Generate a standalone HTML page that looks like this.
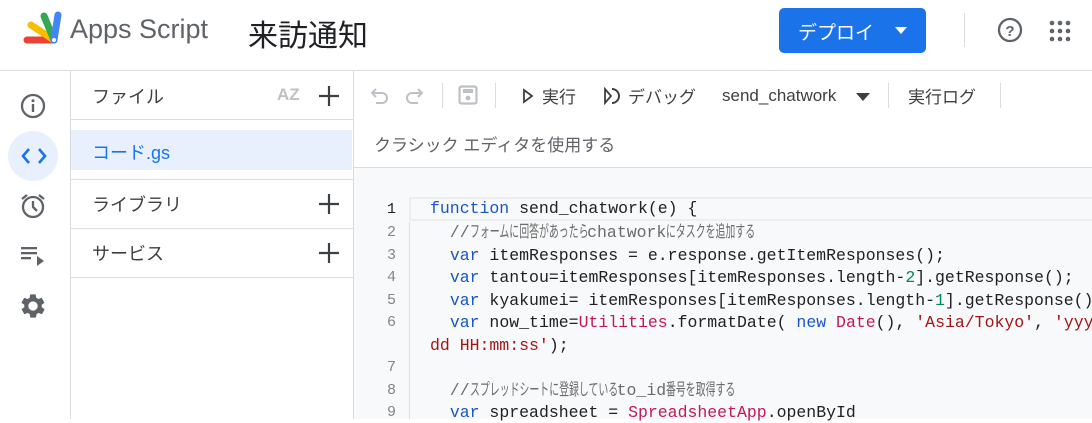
<!DOCTYPE html>
<html><head><meta charset="utf-8"><style>
*{box-sizing:border-box;margin:0;padding:0}
body{width:1092px;height:419px;overflow:hidden;background:#fff;font-family:"Liberation Sans","Noto Sans CJK JP",sans-serif;color:#3c4043;position:relative}
.abs{position:absolute}
.hl{position:absolute;background:#dadce0}
.t{position:absolute;white-space:nowrap}
.code{position:absolute;left:354px;top:168px;right:0;bottom:0;background:#f8f9fa}
.ln{position:absolute;left:370px;width:26px;text-align:right;font-family:"Liberation Mono",monospace;font-size:15px;line-height:20px;color:#80868b}
.cl{position:absolute;left:430px;font-family:"Liberation Mono","Noto Sans CJK JP",monospace;font-size:16.5px;line-height:20px;color:#202124;white-space:nowrap}
.k{color:#1a55c8}.s{color:#a31515}.u{color:#c2185b}.c{color:#6b6b6b}.n{color:#098658}
.j{display:inline-block;transform:scaleX(.6);transform-origin:left center}
.plus{position:absolute;width:22px;height:22px}
</style></head><body>
<!-- header -->
<svg class="abs" style="left:20px;top:10px" width="46" height="38" viewBox="0 0 46 38" stroke-linecap="round" fill="none">
<line x1="34" y1="30" x2="7" y2="30" stroke="#ea4335" stroke-width="7"/>
<line x1="34" y1="30" x2="11" y2="15" stroke="#fbbc04" stroke-width="7"/>
<line x1="34" y1="30" x2="24" y2="6" stroke="#34a853" stroke-width="7"/>
<line x1="34" y1="30" x2="38" y2="5" stroke="#4285f4" stroke-width="7"/>
<circle cx="34" cy="30" r="2" fill="#fff"/>
</svg>
<div class="t" style="left:70px;top:14px;font-size:27px;color:#5f6368">Apps Script</div>
<div class="t" style="left:248px;top:11px;font-size:30px;color:#202124">来訪通知</div>
<div class="abs" style="left:779px;top:8px;width:147px;height:45px;background:#1a73e8;border-radius:5px"></div>
<div class="t" style="left:798px;top:18px;font-size:19px;color:#fff">デプロイ</div>
<div class="abs" style="left:895px;top:27px;width:0;height:0;border-left:6px solid transparent;border-right:6px solid transparent;border-top:7px solid #fff"></div>
<div class="hl" style="left:964px;top:13px;width:1px;height:34px"></div>
<svg class="abs" style="left:997px;top:17px" width="28" height="28" viewBox="0 0 28 28"><circle cx="13" cy="13" r="11" fill="none" stroke="#5f6368" stroke-width="2.3"/><text x="13" y="19" font-size="15" font-weight="bold" text-anchor="middle" fill="#5f6368" font-family="Liberation Sans">?</text></svg>
<svg class="abs" style="left:1049px;top:20px" width="22" height="22" viewBox="0 0 22 22" fill="#5f6368"><circle cx="3" cy="3" r="2.3"/><circle cx="11" cy="3" r="2.3"/><circle cx="19" cy="3" r="2.3"/><circle cx="3" cy="11" r="2.3"/><circle cx="11" cy="11" r="2.3"/><circle cx="19" cy="11" r="2.3"/><circle cx="3" cy="19" r="2.3"/><circle cx="11" cy="19" r="2.3"/><circle cx="19" cy="19" r="2.3"/></svg>
<div class="hl" style="left:0;top:70px;width:1092px;height:1px"></div>
<!-- left rail -->
<div class="hl" style="left:70px;top:71px;width:1px;height:348px"></div>
<svg class="abs" style="left:20px;top:93px" width="26" height="26" viewBox="0 0 26 26"><circle cx="13" cy="13" r="11" fill="none" stroke="#5f6368" stroke-width="2.3"/><rect x="11.8" y="11" width="2.4" height="8" fill="#5f6368"/><circle cx="13" cy="7.7" r="1.5" fill="#5f6368"/></svg>
<div class="abs" style="left:8px;top:131px;width:50px;height:50px;border-radius:25px;background:#e8f0fe"></div>
<svg class="abs" style="left:21px;top:146px" width="26" height="20" viewBox="0 0 26 20"><path d="M8 3 L2 10 L8 17 M18 3 L24 10 L18 17" fill="none" stroke="#1a73e8" stroke-width="2.6"/></svg>
<svg class="abs" style="left:19px;top:192px" width="28" height="28" viewBox="0 0 28 28"><circle cx="14" cy="15" r="10" fill="none" stroke="#5f6368" stroke-width="2.3"/><path d="M14 9 V15 L18 19" fill="none" stroke="#5f6368" stroke-width="2.3"/><path d="M3 7 L8 3 M25 7 L20 3" stroke="#5f6368" stroke-width="2.3"/></svg>
<svg class="abs" style="left:20px;top:245px" width="26" height="22" viewBox="0 0 26 22" fill="#5f6368"><rect x="1" y="2" width="16" height="2.3"/><rect x="1" y="7" width="16" height="2.3"/><rect x="1" y="12" width="10" height="2.3"/><path d="M17 11 L24 16 L17 21Z"/></svg>
<svg class="abs" style="left:19px;top:292px" width="28" height="28" viewBox="0 0 24 24"><path fill="#5f6368" d="M19.4 13c.04-.3.1-.7.1-1s-.03-.7-.1-1l2.1-1.6c.2-.15.25-.4.1-.65l-2-3.460c-.12-.22-.4-.3-.6-.22l-2.5 1c-.5-.4-1.1-.7-1.7-1l-.4-2.65A.5.5 0 0 0 14 2h-4a.5.5 0 0 0-.5.42l-.4 2.65c-.6.25-1.2.6-1.7 1l-2.5-1c-.2-.08-.5 0-.6.22l-2 3.46c-.13.22-.07.5.1.65L4.6 11c-.04.3-.1.7-.1 1s.03.7.1 1l-2.1 1.6c-.2.15-.25.4-.1.65l2 3.46c.12.22.4.3.6.22l2.5-1c.5.4 1.1.7 1.7 1l.4 2.65c.04.24.25.42.5.42h4c.25 0 .46-.18.5-.42l.4-2.650c.6-.25 1.2-.6 1.7-1l2.5 1c.2.08.5 0 .6-.22l2-3.46c.13-.22.07-.5-.1-.65L19.4 13zM12 16a4 4 0 1 1 0-8 4 4 0 0 1 0 8z" fill-rule="evenodd"/></svg>
<!-- files panel -->
<div class="hl" style="left:353px;top:71px;width:1px;height:348px"></div>
<div class="t" style="left:92px;top:83px;font-size:18px">ファイル</div>
<div class="t" style="left:277px;top:85px;font-size:17px;font-weight:bold;color:#bdc1c6">AZ</div>
<svg class="plus" style="left:318px;top:85px" viewBox="0 0 22 22"><path d="M11 1V21M1 11H21" stroke="#3c4043" stroke-width="2.2"/></svg>
<div class="hl" style="left:71px;top:119px;width:282px;height:1px"></div>
<div class="abs" style="left:71px;top:130px;width:281px;height:40px;background:#e8f0fe"></div>
<div class="t" style="left:92px;top:139px;font-size:18px;color:#1a73e8">コード.gs</div>
<div class="hl" style="left:71px;top:179px;width:282px;height:1px"></div>
<div class="t" style="left:92px;top:191px;font-size:18px">ライブラリ</div>
<svg class="plus" style="left:318px;top:193px" viewBox="0 0 22 22"><path d="M11 1V21M1 11H21" stroke="#3c4043" stroke-width="2.2"/></svg>
<div class="hl" style="left:71px;top:228px;width:282px;height:1px"></div>
<div class="t" style="left:92px;top:240px;font-size:18px">サービス</div>
<svg class="plus" style="left:318px;top:242px" viewBox="0 0 22 22"><path d="M11 1V21M1 11H21" stroke="#3c4043" stroke-width="2.2"/></svg>
<div class="hl" style="left:71px;top:277px;width:282px;height:1px"></div>
<!-- toolbar -->
<svg class="abs" style="left:370px;top:86px" width="20" height="18" viewBox="0 0 20 18"><path d="M6 3 L2 7 L6 11 M2 7 H12 A5 5 0 0 1 12 17 H6" fill="none" stroke="#bdc1c6" stroke-width="2"/></svg>
<svg class="abs" style="left:404px;top:86px" width="20" height="18" viewBox="0 0 20 18"><path d="M14 3 L18 7 L14 11 M18 7 H8 A5 5 0 0 0 8 17 H14" fill="none" stroke="#bdc1c6" stroke-width="2"/></svg>
<div class="hl" style="left:442px;top:83px;width:1px;height:25px"></div>
<svg class="abs" style="left:458px;top:85px" width="20" height="20" viewBox="0 0 20 20"><rect x="1.5" y="1.5" width="17" height="17" rx="2" fill="none" stroke="#bdc1c6" stroke-width="2.2"/><rect x="5" y="4" width="10" height="4" fill="#bdc1c6"/><circle cx="10" cy="13" r="2.4" fill="#bdc1c6"/></svg>
<div class="hl" style="left:495px;top:83px;width:1px;height:25px"></div>
<svg class="abs" style="left:522px;top:88px" width="12" height="16" viewBox="0 0 12 16"><path d="M2 2 L10 8 L2 14Z" fill="none" stroke="#3c4043" stroke-width="1.8"/></svg>
<div class="t" style="left:542px;top:83px;font-size:17px">実行</div>
<svg class="abs" style="left:603px;top:86px" width="22" height="20" viewBox="0 0 22 20"><path d="M2 3 L8 10 L2 17Z" fill="none" stroke="#3c4043" stroke-width="1.8"/><path d="M9 3 A7 7 0 1 1 9 17" fill="none" stroke="#3c4043" stroke-width="2"/></svg>
<div class="t" style="left:628px;top:83px;font-size:17px">デバッグ</div>
<div class="t" style="left:722px;top:86px;font-size:17px;color:#3c4043">send_chatwork</div>
<div class="abs" style="left:856px;top:93px;border-left:7px solid transparent;border-right:7px solid transparent;border-top:8px solid #3c4043"></div>
<div class="hl" style="left:888px;top:83px;width:1px;height:25px"></div>
<div class="t" style="left:908px;top:83px;font-size:17px">実行ログ</div>
<div class="hl" style="left:1000px;top:83px;width:1px;height:25px"></div>
<div class="t" style="left:374px;top:131px;font-size:17px;color:#5f6368">クラシック エディタを使用する</div>
<div class="hl" style="left:354px;top:167px;width:738px;height:1px"></div>
<!-- code -->
<div class="code"></div>
<div class="abs" style="left:409px;top:197px;width:683px;height:24px;border:2px solid #eceef0;border-right:none"></div>
<div class="abs" style="left:409px;top:222px;width:1px;height:197px;background:#e0e0e0"></div>
<div class="ln" style="top:200px;color:#202124">1</div>
<div class="ln" style="top:223px">2</div>
<div class="ln" style="top:246px">3</div>
<div class="ln" style="top:268px">4</div>
<div class="ln" style="top:291px">5</div>
<div class="ln" style="top:313px">6</div>
<div class="ln" style="top:358px">7</div>
<div class="ln" style="top:381px">8</div>
<div class="ln" style="top:403px">9</div>
<div class="cl" style="top:199px"><span class="k">function</span> send_chatwork(e) {</div>
<div class="cl c" style="top:223px">&nbsp;&nbsp;//<span class="j" style="margin-right:-80px">フォームに回答があったら</span>chatwork<span class="j" style="margin-right:-60px">にタスクを追加する</span></div>
<div class="cl" style="top:246px">&nbsp;&nbsp;<span class="k">var</span> itemResponses = e.response.getItemResponses();</div>
<div class="cl" style="top:268px">&nbsp;&nbsp;<span class="k">var</span> tantou=itemResponses[itemResponses.length-<span class="n">2</span>].getResponse();</div>
<div class="cl" style="top:291px">&nbsp;&nbsp;<span class="k">var</span> kyakumei= itemResponses[itemResponses.length-<span class="n">1</span>].getResponse();</div>
<div class="cl" style="top:313px">&nbsp;&nbsp;<span class="k">var</span> now_time=<span class="u">Utilities</span>.formatDate( <span class="k">new</span> <span class="u">Date</span>(), <span class="s">'Asia/Tokyo'</span>, <span class="s">'yyyy/MM/</span></div>
<div class="cl" style="top:336px;left:430px"><span class="s">dd HH:mm:ss'</span>);</div>
<div class="cl c" style="top:381px">&nbsp;&nbsp;//<span class="j" style="margin-right:-100px">スプレッドシートに登録している</span>to_id<span class="j" style="margin-right:-47px">番号を取得する</span></div>
<div class="cl" style="top:403px">&nbsp;&nbsp;<span class="k">var</span> spreadsheet = <span class="u">SpreadsheetApp</span>.openById</div>
</body></html>
